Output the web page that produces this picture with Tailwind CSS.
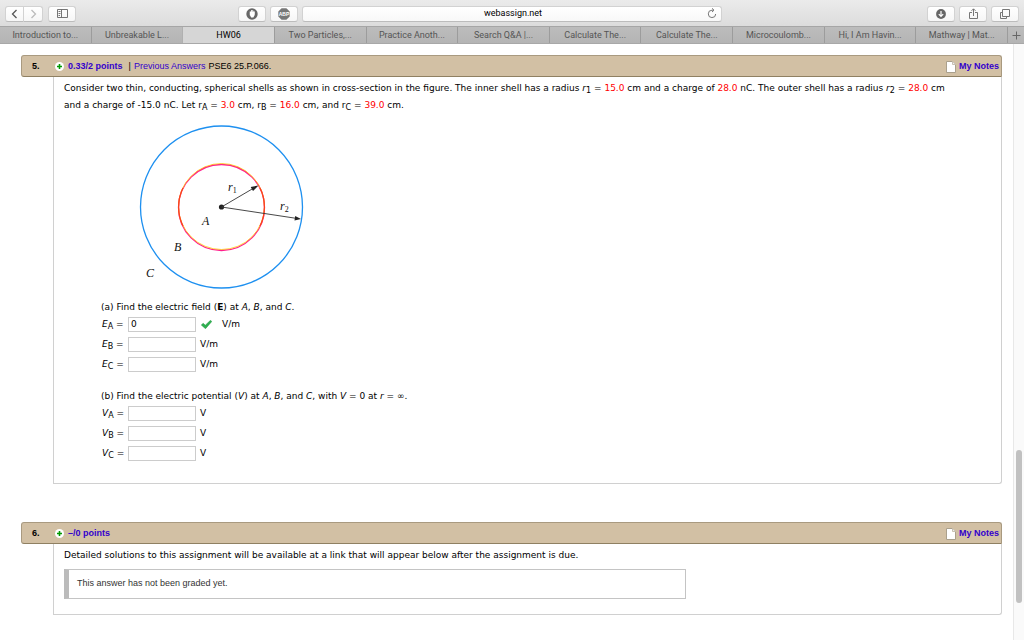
<!DOCTYPE html>
<html lang="en">
<head>
  <meta charset="UTF-8">
  <meta name="viewport" content="width=device-width, initial-scale=1.0">
  <title>HW06</title>
  <script src="https://cdn.jsdelivr.net/npm/@tailwindcss/browser@4"></script>
</head>
<body class="h-screen flex flex-col overflow-hidden bg-white text-black font-['Liberation_Sans',sans-serif]">

<!-- Browser toolbar -->
<header class="flex items-center h-[26px] px-[5px] pt-px bg-linear-to-b from-[#ebebeb] to-[#dcdcdc]">
  <div class="flex-1 flex items-center justify-between pr-1">
    <div class="flex gap-[5px]">
      <div class="flex">
        <button aria-label="Back" class="w-[19px] h-4 flex items-center justify-center rounded-l-[3px] bg-linear-to-b from-white to-[#f6f6f6] border border-[#d2d2d2] border-b-[#bcbcbc]">
          <svg width="7" height="10" viewBox="0 0 7 10" fill="none" stroke="#555" stroke-width="1.3"><path d="M5.5 1 1.5 5l4 4"/></svg>
        </button>
        <button aria-label="Forward" class="w-[19px] h-4 flex items-center justify-center rounded-r-[3px] bg-linear-to-b from-white to-[#f6f6f6] border border-l-0 border-[#d2d2d2] border-b-[#bcbcbc]">
          <svg width="7" height="10" viewBox="0 0 7 10" fill="none" stroke="#bbb" stroke-width="1.3"><path d="M1.5 1l4 4-4 4"/></svg>
        </button>
      </div>
      <button aria-label="Sidebar" class="w-7 h-4 flex items-center justify-center rounded-[3px] bg-linear-to-b from-white to-[#f6f6f6] border border-[#d2d2d2] border-b-[#bcbcbc]">
        <svg width="11" height="9" viewBox="0 0 11 9" fill="none" stroke="#666"><path d="M.5.5h10v8H.5zM4.500.5v8M1.500 2.500h2M1.500 4.500h2M1.500 6.500h1.500" stroke-width=".9"/></svg>
      </button>
    </div>
    <div class="flex gap-1">
      <button aria-label="Block" class="w-7 h-4 flex items-center justify-center rounded-[3px] bg-linear-to-b from-white to-[#f6f6f6] border border-[#d2d2d2] border-b-[#bcbcbc]">
        <svg width="12" height="12" viewBox="0 0 12 12"><circle cx="6" cy="6" r="5.700" fill="#666"/><path d="M3.900 4v3l1.200 2.500h2.300L8.700 7V3.800" fill="#fff"/><path d="M4.300 7V3.700M5.500 6V2.500M6.700 6V2.500M7.900 6V3.300" stroke="#fff" stroke-width=".9" stroke-linecap="round"/></svg>
      </button>
      <button aria-label="AdBlock Plus" class="w-7 h-4 flex items-center justify-center rounded-[3px] bg-linear-to-b from-white to-[#f6f6f6] border border-[#d2d2d2] border-b-[#bcbcbc]">
        <svg width="12" height="12" viewBox="0 0 12 12"><path d="M3.600.3h4.800l3.300 3.300v4.800l-3.300 3.300H3.600L.3 8.400V3.600z" fill="#777"/><text x="6" y="7.800" text-anchor="middle" font-size="5" font-weight="bold" fill="#fff">ABP</text></svg>
      </button>
    </div>
  </div>
  <div class="w-[41.400%] h-4 flex items-center pr-1 rounded-[3px] bg-linear-to-b from-white to-[#f8f8f8] border border-[#d2d2d2] border-b-[#bcbcbc]">
    <input aria-label="Address" value="webassign.net" class="flex-1 min-w-0 pl-4 text-center text-[9px] font-['Roboto'] outline-none">
    <button aria-label="Reload">
      <svg width="10" height="11" viewBox="0 0 10 11" fill="none" stroke="#777"><path d="M8.700 6A3.700 3.700 0 1 1 5 2.200h1.500M5 .3l2 1.900L5 4"/></svg>
    </button>
  </div>
  <div class="flex-1 flex justify-end gap-1 pl-1">
    <button aria-label="Downloads" class="w-7 h-4 flex items-center justify-center rounded-[3px] bg-linear-to-b from-white to-[#f6f6f6] border border-[#d2d2d2] border-b-[#bcbcbc]">
      <svg width="10" height="10" viewBox="0 0 10 10"><circle cx="5" cy="5" r="4.900" fill="#666"/><path d="M5 2v5.500M2.800 5.200 5 7.500l2.200-2.300" fill="none" stroke="#fff" stroke-width="1.200"/></svg>
    </button>
    <button aria-label="Share" class="w-7 h-4 flex items-center justify-center rounded-[3px] bg-linear-to-b from-white to-[#f6f6f6] border border-[#d2d2d2] border-b-[#bcbcbc]">
      <svg width="9" height="12" viewBox="0 0 9 12" fill="none" stroke="#777"><path d="M3 4.500H.5v6h8v-6H6M4.500 8V1M2.500 2.800l2-2 2 2"/></svg>
    </button>
    <button aria-label="Show tabs" class="w-7 h-4 flex items-center justify-center rounded-[3px] bg-linear-to-b from-white to-[#f6f6f6] border border-[#d2d2d2] border-b-[#bcbcbc]">
      <svg width="10" height="10" viewBox="0 0 10 10" fill="none" stroke="#777"><path d="M2.500 3.500h-2v6h6v-2M2.500.5h7v7h-7z"/></svg>
    </button>
  </div>
</header>

<!-- Tabs -->
<nav class="flex h-[18px] border-y border-t-[#a6a6a6] border-b-[#a8a8a8] bg-linear-to-b from-[#bcbcbc] to-[#b4b4b4] text-[9px] leading-4 text-center text-[#555] font-['Roboto']">
  <a href="#" class="flex-1 border-r border-[#9c9c9c]">Introduction to...</a>
  <a href="#" class="flex-1 border-r border-[#b0b0b0]">Unbreakable L...</a>
  <a href="#" class="flex-1 border-r border-[#9c9c9c] bg-[#d6d6d6] text-black">HW06</a>
  <a href="#" class="flex-1 border-r border-[#9c9c9c]">Two Particles,...</a>
  <a href="#" class="flex-1 border-r border-[#9c9c9c]">Practice Anoth...</a>
  <a href="#" class="flex-1 border-r border-[#9c9c9c]">Search Q&amp;A |...</a>
  <a href="#" class="flex-1 border-r border-[#9c9c9c]">Calculate The...</a>
  <a href="#" class="flex-1 border-r border-[#9c9c9c]">Calculate The...</a>
  <a href="#" class="flex-1 border-r border-[#9c9c9c]">Microcoulomb...</a>
  <a href="#" class="flex-1 border-r border-[#9c9c9c]">Hi, I Am Havin...</a>
  <a href="#" class="flex-1 border-r border-[#9c9c9c]">Mathway | Mat...</a>
  <button aria-label="New tab" class="w-4 flex items-center justify-center">
    <svg width="9" height="9" viewBox="0 0 9 9" stroke="#666"><path d="M4.500.5v8M.5 4.500h8"/></svg>
  </button>
</nav>

<div class="flex-1 flex min-h-0">
  <main class="flex-1 pt-[11px] pl-[21px] pr-[11px]">

    <!-- Question 5 -->
    <section>
      <div class="flex items-center h-[22px] pt-px pl-[10px] pr-[2px] rounded-t-[3px] rounded-bl-[3px] border border-[#a99a80] border-b-[#8f8062] bg-[#d2c0a4] text-[9px]">
        <b class="w-[23px]">5.</b>
        <svg width="9" height="9" viewBox="0 0 9 9" class="mr-1"><circle cx="4.500" cy="4.500" r="4.500" fill="#fff"/><path d="M4.500 2v5M2 4.500h5" stroke="#090" stroke-width="1.600"/></svg>
        <a href="#" class="font-bold text-[#30c]">0.33/2 points</a>
        <span class="pl-1.5 pr-[3px]">|</span>
        <a href="#" class="text-[#30c]">Previous Answers</a>
        <span class="pl-[3px]">PSE6 25.P.066.</span>
        <a href="#" class="ml-auto flex items-center gap-[3px] font-bold text-[#30c]">
          <svg width="10" height="12" viewBox="0 0 10 12"><path d="M.5.5h6l3 3v8h-9z" fill="#fff" stroke="#aaa08c"/><path d="M6.500.5v3h3" fill="#eee" stroke="#c8c0b0"/></svg>
          My Notes
        </a>
      </div>
      <div class="ml-8 pt-[3px] pl-[10px] pr-2 pb-5 border border-t-0 border-[#d0d0d0] rounded-br-[3px] font-['DejaVu_Sans',sans-serif] text-[9px] leading-[17px]">
        <p>Consider two thin, conducting, spherical shells as shown in cross-section in the figure. The inner shell has a radius <i>r</i><sub class="text-[8px]">1</sub> = <span class="text-[#f00]">15.0</span> cm and a charge of <span class="text-[#f00]">28.0</span> nC. The outer shell has a radius <i>r</i><sub class="text-[8px]">2</sub> = <span class="text-[#f00]">28.0</span> cm<br>and a charge of -15.0 nC. Let r<sub class="text-[8px]">A</sub> = <span class="text-[#f00]">3.0</span> cm, r<sub class="text-[8px]">B</sub> = <span class="text-[#f00]">16.0</span> cm, and r<sub class="text-[8px]">C</sub> = <span class="text-[#f00]">39.0</span> cm.</p>
        <div class="pl-[37px]">
          <svg class="ml-[35px] mt-[6px] mb-2" width="172" height="172" viewBox="136 120 172 172" fill="none">
            <circle cx="221.500" cy="207" r="81" stroke="#1e90f0" stroke-width="1.300"/>
            <circle cx="221.500" cy="207.500" r="43" stroke="#ff1e8c" stroke-width="1.300"/>
            <circle cx="221.500" cy="206.500" r="43" stroke="#ffc800" stroke-opacity=".75" stroke-width="1"/>
            <path d="M183 188a43 43 0 0 0 0 38M260 188a43 43 0 0 1 0 38" stroke="#f8401e" stroke-width="1.200"/>
            <circle cx="221.500" cy="207" r="2.600" fill="#222"/>
            <path d="M221.500 207 253 188.500M221.500 207 296 218.300" stroke="#333" stroke-width=".9"/>
            <path d="M258.500 185.500l-5.500 5.500-2.300-4zM301 219l-6.500 1.500.7-4.600z" fill="#222"/>
            <g fill="#111" font-family="Liberation Serif, serif" font-style="italic" font-size="12">
              <text x="228" y="191">r<tspan font-size="8" font-style="normal" dy="2">1</tspan></text>
              <text x="280" y="210">r<tspan font-size="8" font-style="normal" dy="2">2</tspan></text>
              <text x="202" y="225">A</text>
              <text x="174" y="251">B</text>
              <text x="146" y="277">C</text>
            </g>
          </svg>
          <p class="leading-[14px]">(a) Find the electric field (<b>E</b>) at <i>A</i>, <i>B</i>, and <i>C</i>.</p>
          <div class="flex items-center h-5">
            <label for="ea" class="w-[27px] pl-px"><i>E</i><sub class="text-[8px]">A</sub> =</label>
            <input id="ea" value="0" class="w-[68px] h-[15px] px-0.5 border border-[#ccc] outline-none">
            <svg class="ml-[5px]" width="11" height="9" viewBox="0 0 11 9"><path d="M.3 5 2.200 3.300 4.300 5.200 9.500.3l1.300 1.200L4.500 8.700z" fill="#2eb050" stroke="#1f9440" stroke-width=".5"/></svg>
            <span class="pl-[10px]">V/m</span>
          </div>
          <div class="flex items-center h-5">
            <label for="eb" class="w-[27px] pl-px"><i>E</i><sub class="text-[8px]">B</sub> =</label>
            <input id="eb" class="w-[68px] h-[15px] px-0.5 border border-[#ccc] outline-none">
            <span class="pl-1">V/m</span>
          </div>
          <div class="flex items-center h-5">
            <label for="ec" class="w-[27px] pl-px"><i>E</i><sub class="text-[8px]">C</sub> =</label>
            <input id="ec" class="w-[68px] h-[15px] px-0.5 border border-[#ccc] outline-none">
            <span class="pl-1">V/m</span>
          </div>
          <p class="mt-[15px] leading-[14px]">(b) Find the electric potential (<i>V</i>) at <i>A</i>, <i>B</i>, and <i>C</i>, with <i>V</i> = 0 at <i>r</i> = ∞.</p>
          <div class="flex items-center h-5">
            <label for="va" class="w-[27px] pl-px"><i>V</i><sub class="text-[8px]">A</sub> =</label>
            <input id="va" class="w-[68px] h-[15px] px-0.5 border border-[#ccc] outline-none">
            <span class="pl-1">V</span>
          </div>
          <div class="flex items-center h-5">
            <label for="vb" class="w-[27px] pl-px"><i>V</i><sub class="text-[8px]">B</sub> =</label>
            <input id="vb" class="w-[68px] h-[15px] px-0.5 border border-[#ccc] outline-none">
            <span class="pl-1">V</span>
          </div>
          <div class="flex items-center h-5">
            <label for="vc" class="w-[27px] pl-px"><i>V</i><sub class="text-[8px]">C</sub> =</label>
            <input id="vc" class="w-[68px] h-[15px] px-0.5 border border-[#ccc] outline-none">
            <span class="pl-1">V</span>
          </div>
        </div>
      </div>
    </section>

    <!-- Question 6 -->
    <section class="mt-[38px]">
      <div class="flex items-center h-[22px] pt-px pl-[10px] pr-[2px] rounded-t-[3px] rounded-bl-[3px] border border-[#a99a80] border-b-[#8f8062] bg-[#d2c0a4] text-[9px]">
        <b class="w-[23px]">6.</b>
        <svg width="9" height="9" viewBox="0 0 9 9" class="mr-1"><circle cx="4.500" cy="4.500" r="4.500" fill="#fff"/><path d="M4.500 2v5M2 4.500h5" stroke="#090" stroke-width="1.600"/></svg>
        <a href="#" class="font-bold text-[#30c]">–/0 points</a>
        <a href="#" class="ml-auto flex items-center gap-[3px] font-bold text-[#30c]">
          <svg width="10" height="12" viewBox="0 0 10 12"><path d="M.5.5h6l3 3v8h-9z" fill="#fff" stroke="#aaa08c"/><path d="M6.500.5v3h3" fill="#eee" stroke="#c8c0b0"/></svg>
          My Notes
        </a>
      </div>
      <div class="ml-8 pt-[3px] pl-[10px] pr-1 pb-[15px] border border-t-0 border-[#d0d0d0] rounded-br-[3px]">
        <p class="font-['DejaVu_Sans',sans-serif] text-[9px] leading-[17px]">Detailed solutions to this assignment will be available at a link that will appear below after the assignment is due.</p>
        <div class="mt-[5px] w-2/3 h-[30px] flex items-center pl-2 border border-l-[5px] border-[#c4c4c4] border-l-[#bbb] text-[9px] text-[#333]">This answer has not been graded yet.</div>
      </div>
    </section>
  </main>

  <!-- Scrollbar -->
  <div class="w-[11px] flex flex-col items-center border-l border-[#e8e8e8] bg-[#fafafa]">
    <div class="grow-[406]"></div>
    <div class="grow-[153] w-1.5 rounded-full bg-[#c1c1c1]"></div>
    <div class="grow-[37]"></div>
  </div>
</div>

</body>
</html>
